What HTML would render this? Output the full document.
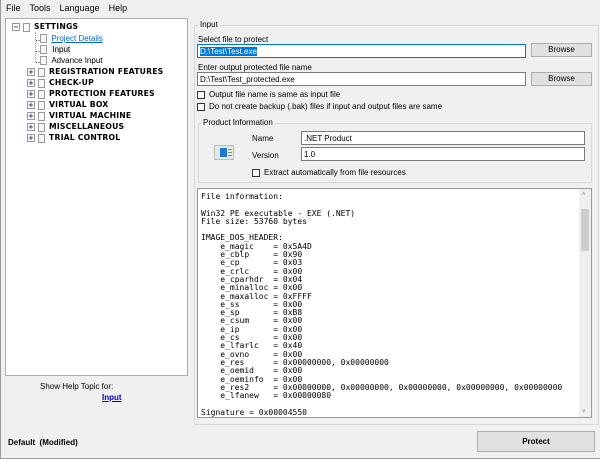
<!DOCTYPE html>
<html><head><style>
*{box-sizing:border-box}
body{margin:0;width:600px;height:459px;background:#f0f0f0;font-family:"Liberation Sans",sans-serif;font-size:8px;color:#000;position:relative;overflow:hidden;border-left:1px solid #999;border-bottom:1px solid #999}
.a{position:absolute}
.menu span{margin-right:9px;font-size:9px}
.tree{left:4px;top:18px;width:183px;height:358px;background:#fff;border:1px solid #adadad}
.node{position:absolute;left:0;white-space:nowrap;font-size:8px}
.b{font-weight:bold;font-family:"DejaVu Sans",sans-serif;font-size:7.7px;letter-spacing:.2px}
.ic{display:inline-block;width:7px;height:9px;border:1px solid #999;background:#f8f8f8;vertical-align:middle;margin-right:4px}
.pm{display:inline-block;width:8px;height:8px;border:1px solid #999;font-size:7px;line-height:6px;text-align:center;vertical-align:middle;margin-right:3px;background:#fff;color:#336}
.grp{border:1px solid #d8d8d8}
.lg{background:#f0f0f0;padding:0 2px;font-size:8px}
.inp{background:#fff;border:1px solid #7a7a7a;height:14px;font-size:8px;padding:2px 2px;line-height:9px}
.btn{background:#e1e1e1;border:1px solid #adadad;text-align:center;font-size:8px;line-height:12px}
.cb{display:inline-block;width:8px;height:8px;border:1px solid #333;background:#fff;vertical-align:middle;margin-right:4px}
pre{margin:0;font-family:"DejaVu Sans Mono",monospace;font-size:8px;line-height:8.3px}
</style></head><body>
<div class="a menu" style="left:5px;top:3px"><span>File</span><span>Tools</span><span>Language</span><span>Help</span></div>
<div class="a tree">
<div class="node b" style="left:6px;top:3px"><span class="pm">−</span><span class="ic"></span>SETTINGS</div>
<div class="a" style="left:29px;top:13px;width:1px;height:30px;border-left:1px dotted #999"></div>
<div class="node" style="left:29px;top:15px">‥<span class="ic"></span><span style="color:#0066cc;text-decoration:underline">Project Details</span></div>
<div class="node" style="left:29px;top:26px">‥<span class="ic"></span><span style="background:#eee;padding:0 1px">Input</span></div>
<div class="node" style="left:29px;top:37px">‥<span class="ic"></span>Advance Input</div>
<div class="node b" style="left:21px;top:48px"><span class="pm">+</span><span class="ic"></span>REGISTRATION FEATURES</div>
<div class="node b" style="left:21px;top:59px"><span class="pm">+</span><span class="ic"></span>CHECK-UP</div>
<div class="node b" style="left:21px;top:70px"><span class="pm">+</span><span class="ic"></span>PROTECTION FEATURES</div>
<div class="node b" style="left:21px;top:81px"><span class="pm">+</span><span class="ic"></span>VIRTUAL BOX</div>
<div class="node b" style="left:21px;top:92px"><span class="pm">+</span><span class="ic"></span>VIRTUAL MACHINE</div>
<div class="node b" style="left:21px;top:103px"><span class="pm">+</span><span class="ic"></span>MISCELLANEOUS</div>
<div class="node b" style="left:21px;top:114px"><span class="pm">+</span><span class="ic"></span>TRIAL CONTROL</div>
</div>
<div class="a" style="left:39px;top:382px">Show Help Topic for:</div>
<div class="a" style="left:101px;top:393px;color:#00c;font-weight:bold;text-decoration:underline">Input</div>
<div class="a" style="left:7px;top:438px;font-weight:bold">Default &nbsp;(Modified)</div>

<div class="a grp" style="left:193px;top:25px;width:405px;height:400px"></div>
<div class="a lg" style="left:197px;top:20px">Input</div>
<div class="a" style="left:197px;top:35px">Select file to protect</div>
<div class="a inp" style="left:196px;top:44px;width:329px;border-color:#0078d7"><span style="background:#0078d7;color:#fff">D:\Test\Test.exe</span></div>
<div class="a btn" style="left:530px;top:43px;width:61px;height:14px">Browse</div>
<div class="a" style="left:197px;top:63px">Enter output protected file name</div>
<div class="a inp" style="left:196px;top:72px;width:329px">D:\Test\Test_protected.exe</div>
<div class="a btn" style="left:530px;top:72px;width:61px;height:14px">Browse</div>
<div class="a" style="left:196px;top:90px"><span class="cb"></span>Output file name is same as input file</div>
<div class="a" style="left:196px;top:102px"><span class="cb"></span>Do not create backup (.bak) files if input and output files are same</div>
<div class="a grp" style="left:197px;top:123px;width:394px;height:60px"></div>
<div class="a lg" style="left:200px;top:118px">Product Information</div>
<div class="a" style="left:251px;top:134px">Name</div>
<div class="a inp" style="left:300px;top:131px;width:284px">.NET Product</div>
<div class="a" style="left:251px;top:151px">Version</div>
<div class="a inp" style="left:300px;top:147px;width:284px">1.0</div>
<div class="a" style="left:251px;top:168px"><span class="cb"></span>Extract automatically from file resources</div>
<div class="a" style="left:213px;top:145px;width:20px;height:15px;background:#e8e8e8;border:1px solid #bbb"><div class="a" style="left:5px;top:2px;width:7px;height:9px;background:#1a7ad4"></div><div class="a" style="left:13px;top:3px;width:4px;height:1px;background:#888;box-shadow:0 3px #888,0 6px #888"></div></div>
<div class="a" style="left:196px;top:188px;width:395px;height:230px;background:#fff;border:1px solid #999;padding:4px 0 0 3px">
<pre>File information:

Win32 PE executable - EXE (.NET)
File size: 53760 bytes

IMAGE_DOS_HEADER:
    e_magic    = 0x5A4D
    e_cblp     = 0x90
    e_cp       = 0x03
    e_crlc     = 0x00
    e_cparhdr  = 0x04
    e_minalloc = 0x00
    e_maxalloc = 0xFFFF
    e_ss       = 0x00
    e_sp       = 0xB8
    e_csum     = 0x00
    e_ip       = 0x00
    e_cs       = 0x00
    e_lfarlc   = 0x40
    e_ovno     = 0x00
    e_res      = 0x00000000, 0x00000000
    e_oemid    = 0x00
    e_oeminfo  = 0x00
    e_res2     = 0x00000000, 0x00000000, 0x00000000, 0x00000000, 0x00000000
    e_lfanew   = 0x00000080

Signature = 0x00004550</pre>
<div class="a" style="right:0;top:0;width:12px;height:228px;background:#f0f0f0"><div class="a" style="left:2px;top:20px;width:8px;height:42px;background:#cdcdcd"></div><div class="a" style="left:3px;top:3px;font-size:6px;color:#777">˄</div><div class="a" style="left:3px;bottom:2px;font-size:6px;color:#777">˅</div></div>
</div>
<div class="a btn" style="left:476px;top:431px;width:118px;height:21px;line-height:19px;font-weight:bold">Protect</div>
</body></html>
